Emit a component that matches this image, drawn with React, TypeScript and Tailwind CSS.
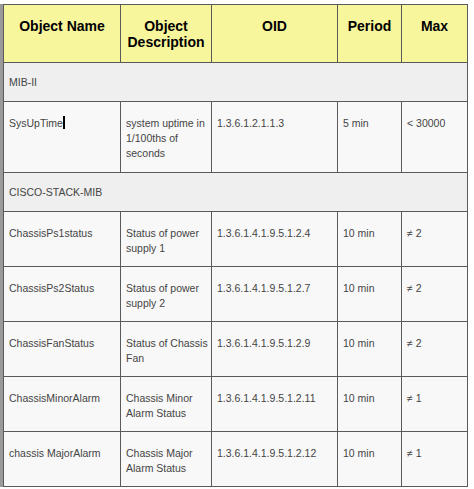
import React from 'react';

type Row =
  | { kind: 'section'; label: string }
  | { kind: 'data'; name: string; desc: string; oid: string; period: string; max: string; h: string; cursor?: boolean };

const rows: Row[] = [
  { kind: 'section', label: 'MIB-II' },
  {
    kind: 'data',
    name: 'SysUpTime',
    desc: 'system uptime in 1/100ths of seconds',
    oid: '1.3.6.1.2.1.1.3',
    period: '5 min',
    max: '< 30000',
    h: 'h-[71px]',
    cursor: true,
  },
  { kind: 'section', label: 'CISCO-STACK-MIB' },
  { kind: 'data', name: 'ChassisPs1status', desc: 'Status of power supply 1', oid: '1.3.6.1.4.1.9.5.1.2.4', period: '10 min', max: '≠ 2', h: 'h-[55px]' },
  { kind: 'data', name: 'ChassisPs2Status', desc: 'Status of power supply 2', oid: '1.3.6.1.4.1.9.5.1.2.7', period: '10 min', max: '≠ 2', h: 'h-[55px]' },
  { kind: 'data', name: 'ChassisFanStatus', desc: 'Status of Chassis Fan', oid: '1.3.6.1.4.1.9.5.1.2.9', period: '10 min', max: '≠ 2', h: 'h-[55px]' },
  { kind: 'data', name: 'ChassisMinorAlarm', desc: 'Chassis Minor Alarm Status', oid: '1.3.6.1.4.1.9.5.1.2.11', period: '10 min', max: '≠ 1', h: 'h-[55px]' },
  { kind: 'data', name: 'chassis MajorAlarm', desc: 'Chassis Major Alarm Status', oid: '1.3.6.1.4.1.9.5.1.2.12', period: '10 min', max: '≠ 1', h: 'h-[55px]' },
];

const th = 'border border-[#5a5a5a] bg-[#f8f69c] text-center align-top pt-[13px] font-bold text-[14px] leading-[16px] text-black px-1';
const td = 'border border-[#5a5a5a] bg-[#f8f8f8] align-top pl-[5px] pr-0 pt-[14px] text-[10.5px] leading-[15px] text-[#444]';

export default function App() {
  return (
    <div className="w-[474px] h-[489px] bg-white pt-[4px]" style={{ fontFamily: '"Liberation Sans", Arial, sans-serif' }}>
      <div className="w-[467px] border-l-[3px] border-[#9a9a9a]">
        <table className="border-collapse table-fixed w-[464px]">
          <colgroup>
            <col className="w-[117px]" />
            <col className="w-[91px]" />
            <col className="w-[126px]" />
            <col className="w-[64px]" />
            <col className="w-[66px]" />
          </colgroup>
          <thead>
            <tr className="h-[58px]">
              <th className={th}>Object Name</th>
              <th className={th}>Object<br />Description</th>
              <th className={th}>OID</th>
              <th className={th}>Period</th>
              <th className={th}>Max</th>
            </tr>
          </thead>
          <tbody>
            {rows.map((r, i) =>
              r.kind === 'section' ? (
                <tr key={i} className="h-[39px]">
                  <td colSpan={5} className="border border-[#5a5a5a] bg-[#efefef] align-middle pl-[5px] text-[10.5px] leading-[15px] text-[#444]">
                    {r.label}
                  </td>
                </tr>
              ) : (
                <tr key={i} className={r.h}>
                  <td className={td}>
                    {r.name}
                    {r.cursor && <span className="inline-block w-[2px] h-[13px] bg-black align-[-2px]" />}
                  </td>
                  <td className={td}>{r.desc}</td>
                  <td className={td}>{r.oid}</td>
                  <td className={td}>{r.period}</td>
                  <td className={td}>{r.max}</td>
                </tr>
              )
            )}
          </tbody>
        </table>
      </div>
    </div>
  );
}
